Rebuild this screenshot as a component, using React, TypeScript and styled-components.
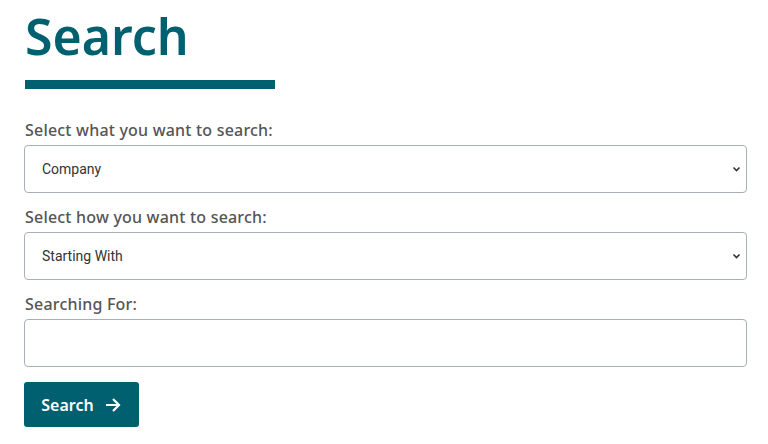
import styled, { createGlobalStyle } from "styled-components";

const Global = createGlobalStyle`
  body {
    margin: 0;
    background: #fff;
    font-family: "Noto Sans", "Liberation Sans", sans-serif;
  }
`;

const Page = styled.div`
  padding: 4px 21px 0 24px;
  display: flex;
  flex-direction: column;
`;

const Title = styled.h1`
  margin: 0;
  font-size: 50px;
  font-weight: 600;
  color: #00606f;
  line-height: 64px;
  padding-left: 1px;
`;

const Rule = styled.div`
  width: 250px;
  height: 9px;
  background: #00606f;
  margin: 12px 0 31px 1px;
`;

const Field = styled.div`
  display: flex;
  flex-direction: column;
  gap: 5px;
  margin-bottom: 14px;
`;

const Label = styled.label`
  font-size: 16px;
  font-weight: 500;
  color: #555;
  line-height: 20px;
  letter-spacing: 0.2px;
  padding-left: 1px;
`;

const SelectBox = styled.div`
  position: relative;
  height: 46px;
  border: 1px solid #a9aeb8;
  border-radius: 4px;
  display: flex;
  align-items: center;
  padding: 0 17px;
  font-family: Roboto, "Noto Sans", sans-serif;
  font-size: 14px;
  color: #333;
`;

const Chevron = styled.svg`
  position: absolute;
  right: 5px;
  top: 50%;
  margin-top: -4px;
`;

const Input = styled.div`
  height: 46px;
  border: 1px solid #a9aeb8;
  border-radius: 4px;
`;

const Button = styled.button`
  align-self: flex-start;
  width: 115px;
  height: 45px;
  margin-top: 1px;
  border: none;
  border-radius: 3px;
  background: #00606f;
  color: #fff;
  font-family: "Noto Sans", sans-serif;
  font-size: 16px;
  font-weight: 600;
  display: flex;
  align-items: center;
  justify-content: center;
  gap: 10px;
  padding: 0;
`;

const Select = ({ value }: { value: string }) => (
  <SelectBox>
    {value}
    <Chevron width="9" height="8" viewBox="0 0 9 8">
      <path d="M1.5 2.5 L4.5 5.5 L7.5 2.5" stroke="#333" strokeWidth="1.6" fill="none" />
    </Chevron>
  </SelectBox>
);

export default function App() {
  return (
    <>
      <Global />
      <Page>
        <Title>Search</Title>
        <Rule />
        <Field>
          <Label>Select what you want to search:</Label>
          <Select value="Company" />
        </Field>
        <Field>
          <Label>Select how you want to search:</Label>
          <Select value="Starting With" />
        </Field>
        <Field>
          <Label>Searching For:</Label>
          <Input />
        </Field>
        <Button>
          Search
          <svg width="18" height="16" viewBox="0 0 18 16">
            <path d="M2 8 H15 M9 2 L15 8 L9 14" stroke="#fff" strokeWidth="2.2" fill="none" />
          </svg>
        </Button>
      </Page>
    </>
  );
}
